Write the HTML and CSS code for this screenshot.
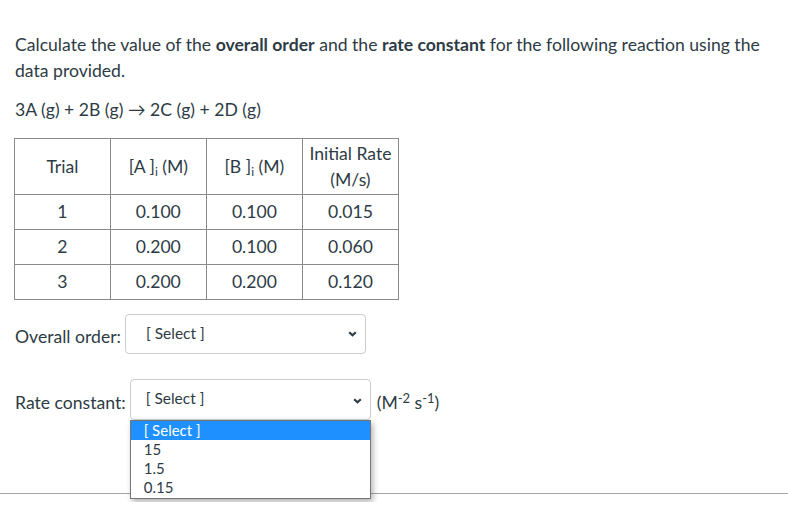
FILE: index.html
```html
<!DOCTYPE html>
<html>
<head>
<meta charset="utf-8">
<link rel="stylesheet" href="styles.css">
</head>
<body>
<div class="page">
  <p class="intro">Calculate the value of the <strong>overall order</strong> and the <strong>rate constant</strong> for the following reaction using the data provided.</p>
  <p class="eq">3A (g) + 2B (g) &rarr; 2C (g) + 2D (g)</p>
  <table class="data">
    <tr class="head">
      <td>Trial</td>
      <td>[A ]<sub>i</sub> (M)</td>
      <td>[B ]<sub>i</sub> (M)</td>
      <td>Initial Rate<br>(M/s)</td>
    </tr>
    <tr><td>1</td><td>0.100</td><td>0.100</td><td>0.015</td></tr>
    <tr><td>2</td><td>0.200</td><td>0.100</td><td>0.060</td></tr>
    <tr><td>3</td><td>0.200</td><td>0.200</td><td>0.120</td></tr>
  </table>
  <div class="row row-order">
    <span class="label">Overall order:</span>
    <div class="select">
      <span class="sel-text">[ Select ]</span>
      <svg class="chev" width="9" height="6" viewBox="0 0 9 6"><path d="M1.2 1.2 L4.5 4.3 L7.8 1.2" fill="none" stroke="#2d3b45" stroke-width="2.2"/></svg>
    </div>
  </div>
  <div class="row row-rate">
    <span class="label">Rate constant:</span>
    <div class="select-wrap">
      <div class="select">
        <span class="sel-text">[ Select ]</span>
        <svg class="chev" width="9" height="6" viewBox="0 0 9 6"><path d="M1.2 1.2 L4.5 4.3 L7.8 1.2" fill="none" stroke="#2d3b45" stroke-width="2.2"/></svg>
      </div>
      <ul class="list">
        <li class="on">[ Select ]</li>
        <li>15</li>
        <li>1.5</li>
        <li>0.15</li>
      </ul>
    </div>
    <span class="unit">(M<sup>-2</sup> s<sup>-1</sup>)</span>
  </div>
  <hr class="rule">
</div>
</body>
</html>
```
FILE: styles.css
```css
html, body {
  margin: 0;
  padding: 0;
  background: #fff;
}
.page {
  padding: 32px 0 8px 0;
  font-family: Lato, "Liberation Sans", sans-serif;
  font-size: 17.6px;
  color: #2d3b45;
}
.intro {
  margin: 0 20px 0 15px;
  line-height: 26px;
}
.intro strong {
  font-weight: 700;
}
.eq {
  margin: 13px 0 0 15px;
  line-height: 26px;
}
.data {
  margin: 15px 0 0 14px;
  border-collapse: collapse;
  border: 1px solid #333;
  width: 385px;
}
.data td {
  border: 1px solid #8a8a8a;
  text-align: center;
  line-height: 26px;
  padding: 4px 0 4px 0;
  width: 96px;
}
.data tr.head td {
  padding: 2px 0 1px 0;
}
.data sub {
  font-size: 12px;
  vertical-align: -3px;
  line-height: 0;
}
.row {
  display: flex;
  align-items: flex-start;
  margin-left: 15px;
}
.row-order {
  margin-top: 14px;
}
.row-rate {
  margin-top: 25px;
}
.label {
  line-height: 26px;
  margin-right: 4px;
}
.row-order .label {
  margin-top: 10px;
}
.row-rate .label {
  margin-top: 11px;
}
.select {
  box-sizing: border-box;
  width: 241px;
  height: 40px;
  border: 1px solid #c7cdd1;
  border-radius: 4px;
  display: flex;
  justify-content: space-between;
  padding: 7px 8px 0 20px;
  background: #fff;
  font-size: 15.5px;
  line-height: 22px;
}
.row-rate .select {
  height: 41px;
  padding-left: 15px;
  padding-top: 7px;
}
.chev {
  margin-top: 9px;
}
.row-rate .chev {
  margin-top: 11px;
}
.select-wrap {
  position: relative;
}
.list {
  position: absolute;
  left: 0;
  top: 41px;
  box-sizing: border-box;
  width: 241px;
  margin: 0;
  padding: 0 0 1px 0;
  list-style: none;
  background: #fff;
  border: 1px solid #767676;
  box-shadow: 2px 3px 6px rgba(0,0,0,0.3);
  font-size: 15px;
  line-height: 19px;
  color: #2d3b45;
  z-index: 2;
}
.list li {
  padding-left: 13px;
  height: 19px;
}
.list li.on {
  background: #1e90ff;
  color: #fff;
}
.unit {
  margin-left: 6px;
  margin-top: 11px;
  line-height: 26px;
}
.unit sup {
  font-size: 13px;
  vertical-align: 6px;
  line-height: 0;
}
.rule {
  margin: 73px 0 0 0;
  border: 0;
  border-top: 1px solid #a5a5a5;
  height: 0;
}
```
